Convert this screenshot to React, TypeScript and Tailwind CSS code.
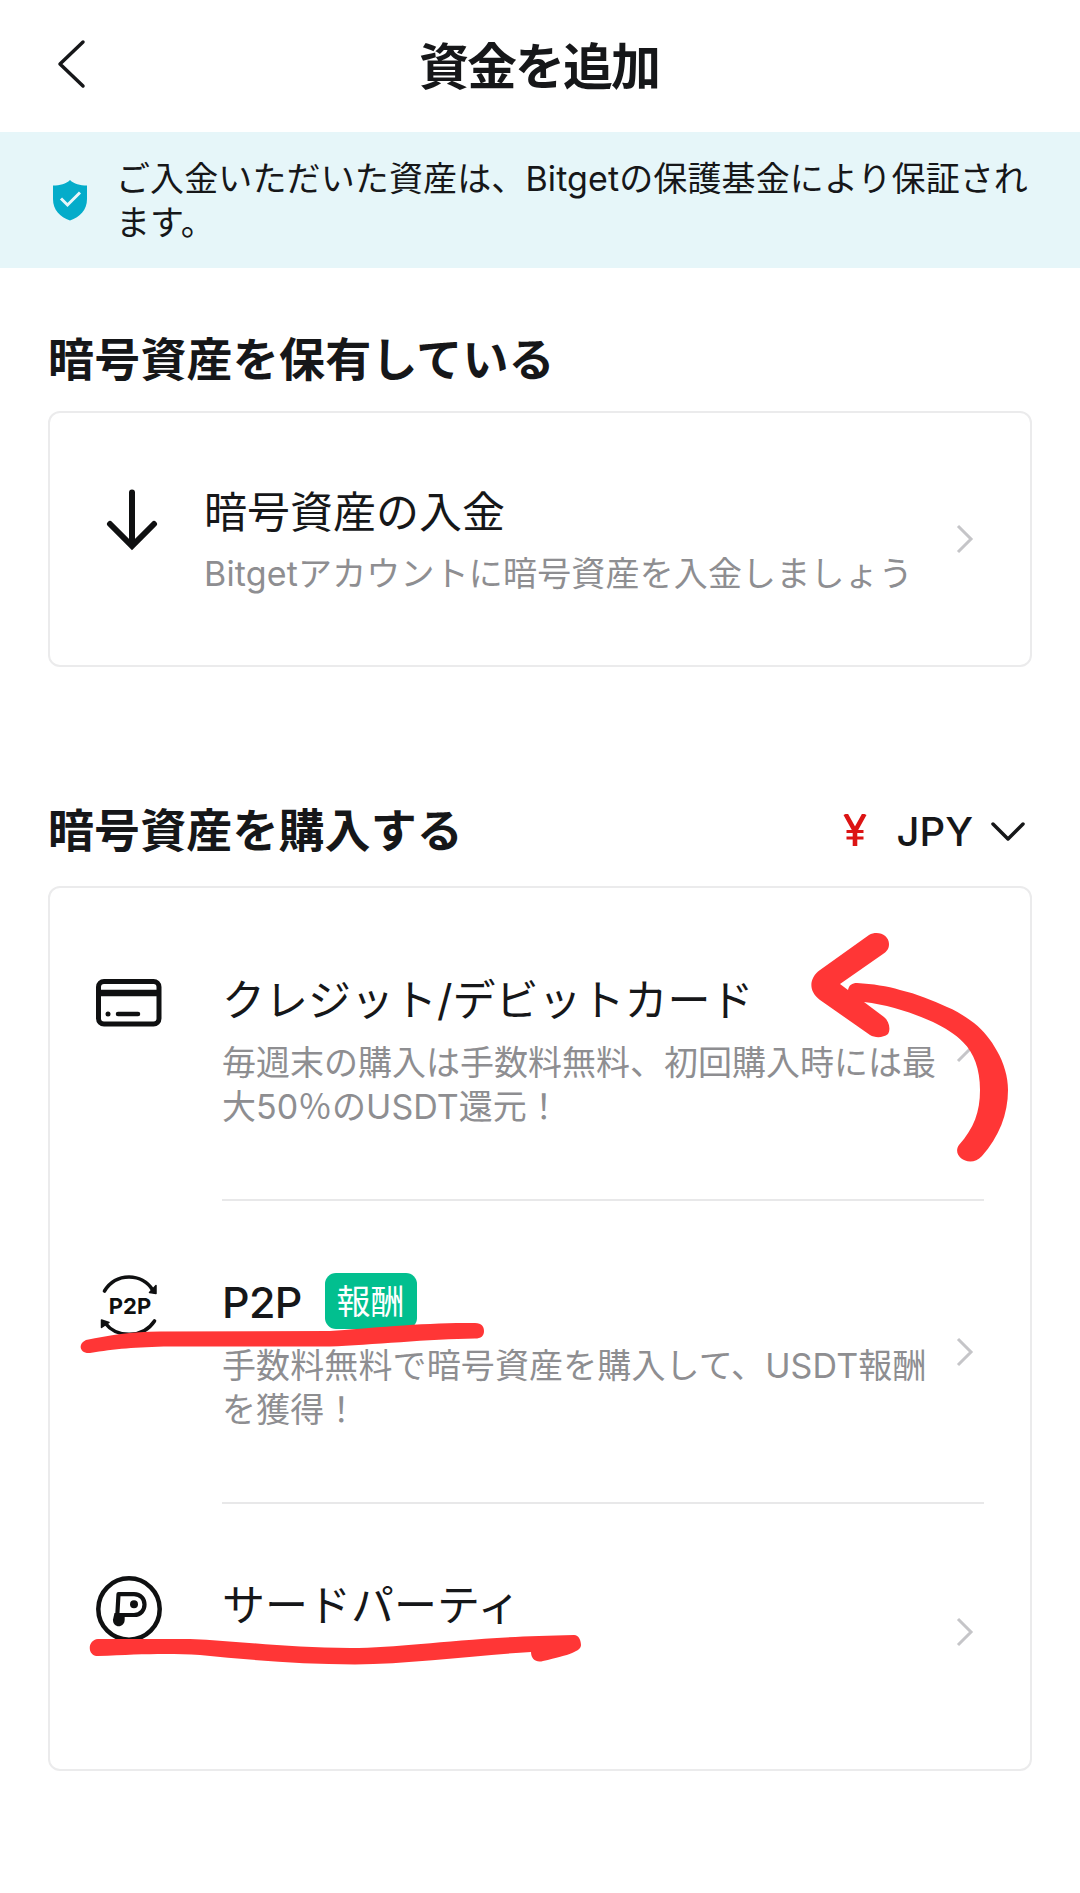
import type { ReactNode } from "react";

function ChevronRight() {
  return (
    <svg className="h-[32px] w-[20px] shrink-0" viewBox="0 0 20 32" fill="none" stroke="#c5c5c8" strokeWidth="3">
      <path d="M3 3 16 16 3 29" />
    </svg>
  );
}

function CardIcon() {
  return (
    <svg className="h-[48px] w-[66px]" viewBox="0 0 66 48" fill="none" stroke="#0f1011">
      <rect x="2.5" y="2.5" width="60.5" height="42.5" rx="5.5" strokeWidth="5" />
      <path d="M3 14H63" strokeWidth="6.500" />
      <path d="M22 35H42" strokeWidth="4.500" strokeLinecap="round" />
      <circle cx="12" cy="35" r="2.500" fill="#0f1011" stroke="none" />
    </svg>
  );
}

function P2PIcon() {
  return (
    <svg className="h-[66px] w-[66px]" viewBox="0 0 66 66" fill="none" stroke="#0f1011" strokeWidth="3.600" strokeLinecap="round">
      <path d="M8.500 18C20 -0.500 46 -0.500 57 17.500" />
      <path d="M60 12.500V20.500L53.500 19.500Z" fill="#0f1011" strokeWidth="1.500" strokeLinejoin="round" />
      <path d="M58.500 48C47 65.500 21 65.500 9 50" />
      <path d="M5.500 47V54.500L13 49.500Z" fill="#0f1011" strokeWidth="1.500" strokeLinejoin="round" />
      <text x="34" y="40.600" textAnchor="middle" fill="#0f1011" stroke="none" className="font-['Inter'] text-[22px] font-bold">
        P2P
      </text>
    </svg>
  );
}

function ThirdPartyIcon() {
  return (
    <svg className="h-[66px] w-[66px]" viewBox="0 0 66 66" fill="none" stroke="#0f1011">
      <circle cx="33" cy="33" r="30.700" strokeWidth="4.500" />
      <path d="M21.300 39 22.500 18.200H38C52 18.200 52 39 38 39H21.300" strokeWidth="4.200" strokeLinejoin="round" />
      <path d="M18.500 37H28.700V43.500C28.700 52.500 16.500 52.500 17 43.500Z" fill="#0f1011" stroke="none" />
      <circle cx="38" cy="28.300" r="4" fill="#0f1011" stroke="none" />
    </svg>
  );
}

type RowProps = { icon: ReactNode; title: string; badge?: string; lines: string[]; className: string; titleClassName?: string; linesClassName?: string };

function Row({ icon, title, badge, lines, className, titleClassName = "", linesClassName = "" }: RowProps) {
  return (
    <div className={`flex ${className}`}>
      <div className="w-[126px] shrink-0">{icon}</div>
      <div className="flex-1">
        <div className="flex h-[56px] items-center">
          <h3 className={`text-[43px] leading-[56px] whitespace-nowrap ${titleClassName}`}>{title}</h3>
          {badge && (
            <span className="ml-[23px] flex h-[56px] w-[92px] items-center justify-center rounded-[11px] bg-[#02bf8f] pt-[2px] text-[34px] leading-none text-white">
              {badge}
            </span>
          )}
        </div>
        {lines.length > 0 && (
          <p className={`text-[34px] leading-[44px] whitespace-nowrap text-[#8e8e91] ${linesClassName}`}>
            {lines.map((l) => (
              <span key={l} className="block">{l}</span>
            ))}
          </p>
        )}
      </div>
    </div>
  );
}

function Annotations() {
  return (
    <svg className="pointer-events-none absolute inset-0 h-[1893px] w-[1080px]" viewBox="0 0 1080 1893" fill="#ff3636">
      <path d="M869 935C878 930 889 935 889 944C889 949 887 951 883 954L840 984L848 990C849 985 852 983 857 983C873 984 887 986 900 990C917 994 932 1000 947 1007C957 1011 966 1017 974 1023C984 1031 991 1040 997 1051C1004 1063 1008 1077 1008 1090C1008 1114 999 1137 982 1156C970 1169 951 1156 959 1145C974 1128 980 1112 980 1090C980 1069 974 1053 963 1042C955 1034 945 1028 933 1022C911 1012 888 1005 864 1002L884 1017C889 1021 891 1029 888 1034C883 1038 875 1038 870 1035L820 1000C808 991 809 978 820 970Z" />
      <path d="M86 1340C110 1335 130 1332 160 1331.500L330 1331C370 1328 430 1322 475 1323C482 1323 484 1327 484 1331C484 1336 481 1338.500 475 1338.500C430 1339 370 1345 330 1346.500L170 1346.500C135 1347 115 1349 90 1353C80 1354 77 1344 86 1340Z" />
      <path d="M98 1639L190 1639C240 1641 290 1648 350 1648C410 1648 460 1637 574 1635C579 1635 581 1641 581 1645C581 1651 570 1655 543 1661C536 1663 531 1659 531 1652C480 1655 410 1664 355 1664.500C300 1664 250 1660 200 1655C170 1653 140 1654 98 1656C87 1656 87 1640 98 1639Z" />
    </svg>
  );
}

export default function App() {
  return (
    <main lang="ja" className="relative flex h-[1893px] w-[1080px] flex-col bg-white font-['Inter','Noto_Sans_CJK_JP',sans-serif] text-[#161719]">
      <header className="relative flex h-[132px] items-center justify-center">
        <svg className="absolute top-[38px] left-[55px] h-[52px] w-[32px]" viewBox="0 0 32 52" fill="none" stroke="#161719" strokeWidth="3.500" strokeLinecap="round" strokeLinejoin="round">
          <path d="M28 4 5 26 28 48" />
        </svg>
        <h1 className="mt-[2px] mr-[2px] text-[50px] leading-[60px] font-bold tracking-[-2.000px]">資金を追加</h1>
      </header>

      <section className="flex h-[136px] shrink-0 items-center bg-[#e6f6f9]">
        <svg className="mt-[-1px] ml-[53px] h-[42px] w-[34px] shrink-0" viewBox="0 0 34 42">
          <path d="M17 1C21 5 27 6.500 34 6.500V20C34 31 27 38 17 41.500C7 38 0 31 0 20V6.500C7 6.500 13 5 17 1Z" fill="#04acca" />
          <path d="M8 19.500 14.500 26 27 13.500" fill="none" stroke="#e6f6fa" strokeWidth="3" />
        </svg>
        <p className="mt-[2px] ml-[29px] text-[34px] leading-[44px] tracking-[0.12px] whitespace-nowrap">
          ご入金いただいた資産は、Bitgetの保護基金により保証され
          <br />
          ます。
        </p>
      </section>

      <h2 className="mt-[61px] ml-[48px] text-[46px] leading-[60px] font-bold tracking-[0.2px]">暗号資産を保有している</h2>
      <section className="mx-[48px] mt-[22px] flex h-[256px] shrink-0 rounded-[12px] border-2 border-[#ebebec] pl-[56px]">
        <svg className="mt-[76px] h-[62px] w-[52px] shrink-0" viewBox="0 0 52 62" fill="none" stroke="#0f1011" strokeWidth="6" strokeLinecap="round">
          <path d="M26 3.500V56M4 35 26 57 48 35" />
        </svg>
        <div className="mt-[71px] ml-[46px] flex-1">
          <h3 className="text-[43px] leading-[56px]">暗号資産の入金</h3>
          <p className="mt-[12px] text-[34px] leading-[44px] tracking-[0.16px] whitespace-nowrap text-[#8e8e91]">Bitgetアカウントに暗号資産を入金しましょう</p>
        </div>
        <div className="mt-[110px] mr-[55px]">
          <ChevronRight />
        </div>
      </section>

      <div className="mt-[133px] mr-[52px] ml-[48px] flex h-[60px] shrink-0 items-center">
        <h2 className="text-[46px] leading-[60px] font-bold tracking-[0.1px]">暗号資産を購入する</h2>
        <svg className="ml-auto h-[32px] w-[24px]" viewBox="0 0 24 32" fill="none" stroke="#dc1414">
          <path d="M2.500 0 12 17 21.500 0M12 16V32" strokeWidth="4.600" />
          <path d="M3.500 17.500H20.500M3.500 24H20.500" strokeWidth="3" />
        </svg>
        <span className="mt-[4px] ml-[29px] text-[40px] leading-[56px] font-medium">JPY</span>
        <svg className="mt-[3px] ml-[17px] h-[24px] w-[38px]" viewBox="0 0 38 24" fill="none" stroke="#161719" strokeWidth="3.500" strokeLinecap="round" strokeLinejoin="round">
          <path d="M3 4 18 19 33 4" />
        </svg>
      </div>

      <section className="mx-[48px] mt-[26px] flex h-[885px] shrink-0 rounded-[12px] border-2 border-[#ebebec] pr-[46px] pl-[46px]">
        <div className="relative w-full">
          <Row className="pt-[84px]" linesClassName="mt-[13px]" icon={<div className="mt-[7px]"><CardIcon /></div>} title="クレジット/デビットカード" lines={["毎週末の購入は手数料無料、初回購入時には最", "大50％のUSDT還元！"]} />
          <div className="mt-[70px] ml-[126px] h-[2px] bg-[#e8e8e9]" />
          <Row className="pt-[72px]" titleClassName="pt-[2px] font-medium tracking-[-0.7px]" linesClassName="mt-[15px] tracking-[0.12px]" icon={<P2PIcon />} title="P2P" badge="報酬" lines={["手数料無料で暗号資産を購入して、USDT報酬", "を獲得！"]} />
          <div className="mt-[70px] ml-[126px] h-[2px] bg-[#e8e8e9]" />
          <Row className="pt-[73px]" icon={<div className="-mt-px"><ThirdPartyIcon /></div>} title="サードパーティ" lines={[]} />
          <div className="absolute top-[144px] right-[9px]"><ChevronRight /></div>
          <div className="absolute top-[448px] right-[9px]"><ChevronRight /></div>
          <div className="absolute top-[728px] right-[9px]"><ChevronRight /></div>
        </div>
      </section>
      <Annotations />
    </main>
  );
}
